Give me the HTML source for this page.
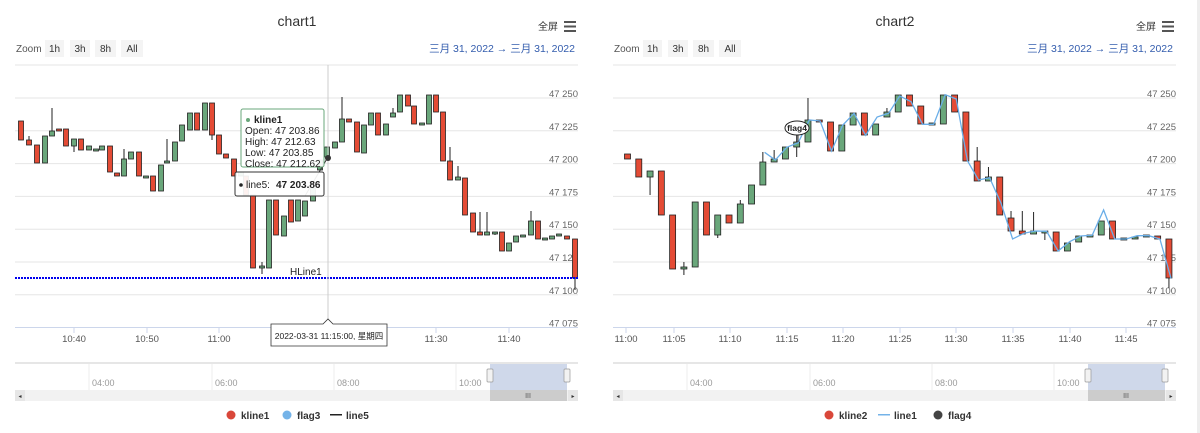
<!DOCTYPE html>
<html><head><meta charset="utf-8">
<style>
body{margin:0;background:#fff;width:1200px;height:433px;overflow:hidden;font-family:"Liberation Sans","Noto Sans CJK SC",sans-serif;}
svg{position:absolute;left:0;top:0}
</style></head><body>
<svg id="s" width="1200" height="433" xmlns="http://www.w3.org/2000/svg" font-family="Liberation Sans, Noto Sans CJK SC, sans-serif">
<rect x="1197" y="0" width="3" height="433" fill="#eee"/>
</svg>
<script>
var s=document.getElementById('s'),NS='http://www.w3.org/2000/svg';
function el(t,a,txt){var e=document.createElementNS(NS,t);for(var k in a)e.setAttribute(k,a[k]);if(txt!==undefined)e.textContent=txt;s.appendChild(e);return e;}
function chrome(o,title,ticks,tl,navlbl,legend){
 el('text',{x:o+297,y:26,'font-size':14,'text-anchor':'middle',fill:'#333'},title);
 el('text',{x:o+538,y:30,'font-size':10,fill:'#333'},'全屏');
 for(var i=0;i<3;i++)el('rect',{x:o+564,y:21+i*4.5,width:12,height:2,fill:'#555'});
 el('text',{x:o+16,y:52,'font-size':10,fill:'#555'},'Zoom');
 [['1h',45,19],['3h',70,20],['8h',95,21],['All',121,22]].forEach(function(b){el('rect',{x:o+b[1],y:40,width:b[2],height:17,fill:'#f4f4f4'});el('text',{x:o+b[1]+b[2]/2,y:52,'font-size':10,'text-anchor':'middle',fill:'#333'},b[0]);});
 el('text',{x:o+575,y:52,'font-size':10.5,'text-anchor':'end',fill:'#335cad'},'三月 31, 2022  →  三月 31, 2022');
 el('line',{x1:o+15,x2:o+578,y1:65,y2:65,stroke:'#e6e6e6'});
 var lab=['47 250','47 225','47 200','47 175','47 150','47 125','47 100','47 075'];
 for(var i=0;i<8;i++){var y=98+i*32.8;if(i<7)el('line',{x1:o+15,x2:o+578,y1:y,y2:y,stroke:'#e6e6e6'});el('text',{x:o+578,y:y-1,'font-size':9.5,'text-anchor':'end',fill:'#666'},lab[i]);}
 el('line',{x1:o+15,x2:o+578,y1:327.5,y2:327.5,stroke:'#ccd6eb'});
 ticks.forEach(function(t){el('line',{x1:o+t[0],x2:o+t[0],y1:327,y2:333,stroke:'#ccd6eb'});el('text',{x:o+t[0],y:342,'font-size':9.5,'text-anchor':'middle',fill:'#555'},t[1]);});
 el('line',{x1:o+15,x2:o+578,y1:363,y2:363,stroke:'#ddd','stroke-width':1.5});
 [[89,'04:00'],[212,'06:00'],[334,'08:00'],[456,'10:00']].forEach(function(t){el('line',{x1:o+t[0],x2:o+t[0],y1:364,y2:390,stroke:'#eee'});el('text',{x:o+t[0]+3,y:386,'font-size':9,fill:'#999'},t[1]);});
 el('rect',{x:o+490,y:364,width:77,height:26,fill:'#cfd8ea'});
 [490,567].forEach(function(x){el('rect',{x:o+x-3,y:369,width:6,height:13,fill:'#f2f2f2',stroke:'#999','stroke-width':0.7,rx:1});});
 el('rect',{x:o+15,y:390,width:563,height:11,fill:'#f2f2f2'});
 el('rect',{x:o+490,y:390,width:77,height:11,fill:'#cccccc'});
 el('rect',{x:o+15,y:390,width:10,height:11,fill:'#e6e6e6'});el('rect',{x:o+568,y:390,width:10,height:11,fill:'#e6e6e6'});
 el('text',{x:o+528,y:398,'font-size':7,'text-anchor':'middle',fill:'#555'},'III');
 el('text',{x:o+20,y:398,'font-size':6,'text-anchor':'middle',fill:'#333'},'◂');el('text',{x:o+573,y:398,'font-size':6,'text-anchor':'middle',fill:'#333'},'▸');
 legend.forEach(function(l){
  if(l[0]=='c')el('circle',{cx:o+l[1],cy:415,r:4.5,fill:l[2]});else el('rect',{x:o+l[1]-6,y:414,width:12,height:1.5,fill:l[2]});
  el('text',{x:o+l[1]+10,y:419,'font-size':10,fill:'#333','font-weight':'bold'},l[3]);});
}
function candles(list,w){list.forEach(function(c){var x=c[0],t=c[1],b=c[2],col=c[3];if(b-t<2)b=t+2;
 var wt=c[4]||t,wb=c[5]||b;if(wt<t||wb>b)el('line',{x1:x,x2:x,y1:wt,y2:wb,stroke:'#222'});
 el('rect',{x:x-w/2,y:t,width:w,height:b-t,fill:col=='r'?'#e44b35':'#6aa77b',stroke:'#222','stroke-width':0.8});});}
chrome(0,'chart1',[[74,'10:40'],[147,'10:50'],[219,'11:00'],[436,'11:30'],[509,'11:40']],0,0,[['c',231,'#d9473a','kline1'],['c',287,'#74b3e8','flag3'],['l',336,'#222','line5']]);
chrome(598,'chart2',[[28,'11:00'],[76,'11:05'],[132,'11:10'],[189,'11:15'],[245,'11:20'],[302,'11:25'],[358,'11:30'],[415,'11:35'],[472,'11:40'],[528,'11:45']],0,0,[['c',231,'#d9473a','kline2'],['l',286,'#74b3e8','line1'],['c',340,'#444','flag4']]);
var c1=[[21,121,140,'r'],[29,140,145,'r',136],[37,145,163,'r'],[45,136,163,'g'],[52,131,136,'g',108],[59,129,131,'r'],[66,129,146,'r'],[74,139,146,'g',0,152],[81,139,150,'r'],[89,146,150,'g'],[96,149,150,'g'],[102,146,150,'g'],[110,146,172,'r'],[117,173,176,'r'],[124,159,176,'g',149],[131,152,159,'g'],[139,152,176,'r'],[146,176,177,'g'],[153,176,191,'r'],[161,165,191,'g'],[167,161,163,'g',139],[175,142,161,'g'],[182,125,141,'g'],[190,113,130,'g'],[197,113,130,'r'],[205,103,130,'g'],[212,103,135,'r',0,140],[219,135,154,'r'],[226,154,158,'r'],[234,159,176,'r'],[241,172,176,'g'],[246,176,195,'r'],[253,195,268,'r'],[262,266,268,'g',262,274],[269,200,268,'g'],[276,200,235,'r'],[284,216,236,'g'],[291,200,222,'r'],[298,200,221,'g'],[305,201,216,'g'],[313,188,201,'g'],[320,160,170,'g'],[327,147,157,'g'],[335,142,148,'g'],[342,119,142,'g',97],[349,119,122,'r'],[357,122,152,'r'],[364,125,153,'g'],[371,113,125,'g'],[378,113,135,'r'],[386,124,135,'g'],[393,113,117,'g',108],[400,95,112,'g'],[408,95,106,'r'],[414,106,124,'r'],[422,123,124,'g'],[429,95,124,'g'],[436,95,112,'r'],[443,112,161,'r'],[450,161,180,'r',147],[458,177,180,'g',166],[465,178,215,'r'],[473,213,232,'r'],[480,232,235,'r',212],[487,232,235,'g',212],[495,232,233,'g',0,235],[502,232,251,'r'],[509,243,251,'g'],[516,236,242,'g'],[523,235,236,'g'],[531,221,235,'g',211],[538,221,239,'r'],[545,238,239,'g'],[552,236,239,'g'],[559,234,235,'g'],[567,236,239,'r'],[575,239,278,'r',0,290]];
candles(c1,5);
el('line',{x1:15,x2:578,y1:278,y2:278,stroke:'#0000ee','stroke-width':2,'stroke-dasharray':'2,1'});
el('text',{x:290,y:275,'font-size':10,fill:'#222'},'HLine1');
el('line',{x1:328,x2:328,y1:65,y2:327,stroke:'#ccc'});
el('line',{x1:305,x2:328,y1:196,y2:157,stroke:'#333'});
el('circle',{cx:328,cy:158,r:3,fill:'#333'});
el('rect',{x:241,y:109,width:83,height:58,fill:'rgba(255,255,255,0.92)',stroke:'#6aa77b',rx:2});
el('circle',{cx:248,cy:120,r:2,fill:'#6aa77b'});
el('text',{x:254,y:123,'font-size':10,'font-weight':'bold',fill:'#222'},'kline1');
['Open: 47 203.86','High: 47 212.63','Low: 47 203.85','Close: 47 212.62'].forEach(function(t,i){el('text',{x:245,y:134+i*11,'font-size':10,fill:'#222'},t);});
el('rect',{x:235,y:172,width:89,height:24,fill:'rgba(255,255,255,0.92)',stroke:'#333',rx:2});
el('circle',{cx:241,cy:185,r:1.8,fill:'#222'});
el('text',{x:246,y:188,'font-size':10,fill:'#222'},'line5: ');
el('text',{x:276,y:188,'font-size':10,'font-weight':'bold',fill:'#222'},'47 203.86');
el('path',{d:'M271 324 H323 L328 319 L333 324 H387 V346 H271 Z',fill:'#fff',stroke:'#333','stroke-width':0.8});
el('text',{x:329,y:339,'font-size':8.5,'text-anchor':'middle',fill:'#222'},'2022-03-31 11:15:00, 星期四');
var y2=[[154,159,'r'],[159,177,'r'],[171,177,'g',0,195],[171,215,'r'],[215,269,'r'],[267,269,'g',262,275],[202,267,'g'],[202,235,'r'],[215,235,'g',0,238],[215,223,'r'],[204,223,'g',200],[185,204,'g'],[162,185,'g',152],[159,162,'g',150],[147,159,'g'],[142,147,'g',135,157],[120,142,'g',98],[120,122,'r'],[122,151,'r'],[125,151,'g'],[113,125,'g'],[113,135,'r'],[124,135,'g'],[112,117,'g',108],[95,112,'g'],[95,106,'r'],[106,124,'r'],[123,124,'g'],[95,124,'g'],[95,112,'r'],[112,161,'r'],[161,181,'r',147],[177,181,'g',167],[177,215,'r'],[218,231,'r',211],[231,234,'r',211],[231,234,'g',212],[231,232,'g',0,240],[232,251,'r'],[243,251,'g'],[236,242,'g'],[235,236,'g'],[221,235,'g'],[221,239,'r'],[238,239,'g'],[237,239,'g'],[235,236,'g'],[236,239,'r'],[239,278,'r',0,288]];
candles(y2.map(function(c,i){return [627.5+i*11.28].concat(c);}),6);
var pts=[[430,277],[458,300],[488,262],[518,248],[547,180],[575,183],[605,273],[634,196],[664,160],[694,226],[724,171],[754,160],[783,108],[813,125],[843,193],[872,193],[902,104],[931,117],[960,302],[989,360],[1018,353],[1048,430],[1078,537],[1108,520],[1137,513],[1167,514],[1197,573],[1227,545],[1256,528],[1286,526],[1316,450],[1345,537],[1375,537],[1404,527],[1434,527],[1463,537],[1492,655]];
el('polyline',{points:pts.map(function(p){return (p[0]/2.613+600).toFixed(1)+','+(p[1]/3+60).toFixed(1);}).join(' '),fill:'none',stroke:'#6aaee8','stroke-width':1.3});
el('line',{x1:798,x2:798,y1:135,y2:142,stroke:'#333'});
el('ellipse',{cx:797,cy:128,rx:12,ry:7,fill:'#fff',stroke:'#222'});
el('text',{x:797,y:131,'font-size':8.5,'font-weight':'bold','text-anchor':'middle',fill:'#222'},'flag4');
</script>
</body></html>
